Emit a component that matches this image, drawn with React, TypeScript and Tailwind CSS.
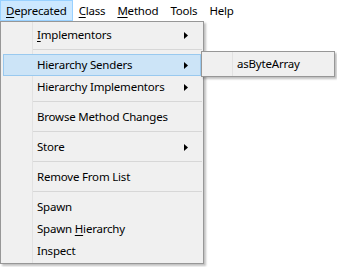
import React from 'react'

type Item =
  | { kind: 'item'; label: React.ReactNode; arrow?: boolean; active?: boolean }
  | { kind: 'sep' }

function U({ children }: { children: React.ReactNode }) {
  return <span className="underline underline-offset-[2px]">{children}</span>
}

function Arrow() {
  return (
    <svg width="4" height="7" viewBox="0 0 4 7" className="block">
      <path d="M0 0 L4 3.5 L0 7 Z" fill="#000" />
    </svg>
  )
}

const items: Item[] = [
  { kind: 'item', label: <><U>I</U>mplementors</>, arrow: true },
  { kind: 'sep' },
  { kind: 'item', label: 'Hierarchy Senders', arrow: true, active: true },
  { kind: 'item', label: 'Hierarchy Implementors', arrow: true },
  { kind: 'sep' },
  { kind: 'item', label: 'Browse Method Changes' },
  { kind: 'sep' },
  { kind: 'item', label: 'Store', arrow: true },
  { kind: 'sep' },
  { kind: 'item', label: 'Remove From List' },
  { kind: 'sep' },
  { kind: 'item', label: 'Spawn' },
  { kind: 'item', label: <>Spawn <U>H</U>ierarchy</> },
  { kind: 'item', label: 'Inspect' },
]

export default function App() {
  const menus = [
    { label: <><U>D</U>eprecated</>, open: true },
    { label: <><U>C</U>lass</> },
    { label: <><U>M</U>ethod</> },
    { label: 'Tools' },
    { label: 'Help' },
  ]

  return (
    <div
      className="relative w-[337px] h-[267px] bg-white overflow-hidden text-[11.5px] tracking-[-0.2px] text-black"
      style={{ fontFamily: '"Noto Sans", "Open Sans", sans-serif' }}
    >
      <nav className="flex h-[21px] items-stretch">
        {menus.map((m, i) => (
          <div
            key={i}
            className={`flex items-center px-[5px] border ${
              m.open ? 'bg-[#cce8ff] border-[#99d1ff]' : 'border-transparent'
            }`}
          >
            {m.label}
          </div>
        ))}
      </nav>

      {/* dropdown */}
      <div className="absolute left-0 top-[21px] w-[204px] bg-[#f0f0f0] border border-[#979797] pt-[2px] pb-[1px] shadow-[2px_2px_2px_rgba(0,0,0,0.25)]">
        <div className="absolute left-[31px] top-0 bottom-0 w-px bg-[#e2e2e2]" />
        {items.map((it, i) =>
          it.kind === 'sep' ? (
            <div key={i} className="h-[8px] pl-[32px] pr-[1px] pt-[3px]">
              <div className="h-px bg-[#d7d7d7]" />
            </div>
          ) : (
            <div
              key={i}
              className={`relative mx-[2px] h-[22px] flex items-center pl-[33px] pr-[12px] border ${
                it.active ? 'bg-[#cce4f7] border-[#99c9ef]' : 'border-transparent'
              }`}
            >
              <span className="flex-1 whitespace-nowrap">{it.label}</span>
              {it.arrow && <Arrow />}
            </div>
          )
        )}
      </div>

      {/* submenu */}
      <div className="absolute left-[201px] top-[51px] w-[134px] bg-[#f0f0f0] border border-[#979797] py-[1px] shadow-[2px_2px_2px_rgba(0,0,0,0.25)]">
        <div className="absolute left-[30px] top-0 bottom-0 w-px bg-[#e2e2e2]" />
        <div className="h-[22px] flex items-center pl-[35px]">asByteArray</div>
      </div>
    </div>
  )
}
